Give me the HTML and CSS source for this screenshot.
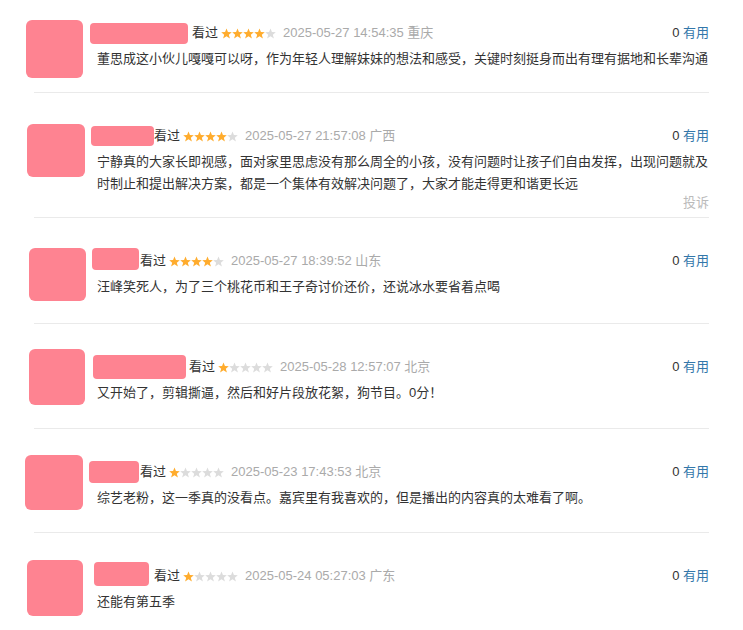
FILE: index.html
```html
<!DOCTYPE html>
<html lang="zh-CN">
<head>
  <meta charset="UTF-8">
  <meta name="viewport" content="width=device-width, initial-scale=1.0">
  <title>短评</title>
  <link rel="stylesheet" href="styles.css">
</head>
<body>
  <!-- 星星图形 -->
  <svg class="sprite" width="0" height="0">
    <defs>
      <symbol id="star" viewBox="0 0 10 10">
        <polygon points="5,0.4 6.3,3.7 9.8,3.8 7.1,6.1 8.1,9.6 5,7.6 1.9,9.6 2.9,6.1 0.2,3.8 3.7,3.7"/>
      </symbol>
    </defs>
  </svg>

  <div class="comment-list">

    <div class="comment-item">
      <div class="avatar avatar-1"></div>
      <div class="comment-body">
        <div class="comment-info">
          <div class="meta">
            <span class="user-name name-1"></span>
            <span class="status">看过</span>
            <span class="stars">
              <svg class="on"><use href="#star"/></svg><svg class="on"><use href="#star"/></svg><svg class="on"><use href="#star"/></svg><svg class="on"><use href="#star"/></svg><svg><use href="#star"/></svg>
            </span>
            <span class="time">2025-05-27 14:54:35 重庆</span>
          </div>
          <div class="votes"><span class="count">0</span> <a href="#">有用</a></div>
        </div>
        <p class="short">董思成这小伙儿嘎嘎可以呀，作为年轻人理解妹妹的想法和感受，关键时刻挺身而出有理有据地和长辈沟通</p>
        <div class="actions"><a href="#" class="report">投诉</a></div>
      </div>
    </div>

    <div class="comment-item hover">
      <div class="avatar avatar-2"></div>
      <div class="comment-body">
        <div class="comment-info">
          <div class="meta">
            <span class="user-name name-2"></span>
            <span class="status">看过</span>
            <span class="stars">
              <svg class="on"><use href="#star"/></svg><svg class="on"><use href="#star"/></svg><svg class="on"><use href="#star"/></svg><svg class="on"><use href="#star"/></svg><svg><use href="#star"/></svg>
            </span>
            <span class="time">2025-05-27 21:57:08 广西</span>
          </div>
          <div class="votes"><span class="count">0</span> <a href="#">有用</a></div>
        </div>
        <p class="short">宁静真的大家长即视感，面对家里思虑没有那么周全的小孩，没有问题时让孩子们自由发挥，出现问题就及时制止和提出解决方案，都是一个集体有效解决问题了，大家才能走得更和谐更长远</p>
        <div class="actions"><a href="#" class="report">投诉</a></div>
      </div>
    </div>

    <div class="comment-item item-3">
      <div class="avatar avatar-3"></div>
      <div class="comment-body">
        <div class="comment-info">
          <div class="meta">
            <span class="user-name name-3"></span>
            <span class="status">看过</span>
            <span class="stars">
              <svg class="on"><use href="#star"/></svg><svg class="on"><use href="#star"/></svg><svg class="on"><use href="#star"/></svg><svg class="on"><use href="#star"/></svg><svg><use href="#star"/></svg>
            </span>
            <span class="time">2025-05-27 18:39:52 山东</span>
          </div>
          <div class="votes"><span class="count">0</span> <a href="#">有用</a></div>
        </div>
        <p class="short">汪峰笑死人，为了三个桃花币和王子奇讨价还价，还说冰水要省着点喝</p>
        <div class="actions"><a href="#" class="report">投诉</a></div>
      </div>
    </div>

    <div class="comment-item item-4">
      <div class="avatar avatar-4"></div>
      <div class="comment-body">
        <div class="comment-info">
          <div class="meta">
            <span class="user-name name-4"></span>
            <span class="status">看过</span>
            <span class="stars">
              <svg class="on"><use href="#star"/></svg><svg><use href="#star"/></svg><svg><use href="#star"/></svg><svg><use href="#star"/></svg><svg><use href="#star"/></svg>
            </span>
            <span class="time">2025-05-28 12:57:07 北京</span>
          </div>
          <div class="votes"><span class="count">0</span> <a href="#">有用</a></div>
        </div>
        <p class="short">又开始了，剪辑撕逼，然后和好片段放花絮，狗节目。0分！</p>
        <div class="actions"><a href="#" class="report">投诉</a></div>
      </div>
    </div>

    <div class="comment-item item-5">
      <div class="avatar avatar-5"></div>
      <div class="comment-body">
        <div class="comment-info">
          <div class="meta">
            <span class="user-name name-5"></span>
            <span class="status">看过</span>
            <span class="stars">
              <svg class="on"><use href="#star"/></svg><svg><use href="#star"/></svg><svg><use href="#star"/></svg><svg><use href="#star"/></svg><svg><use href="#star"/></svg>
            </span>
            <span class="time">2025-05-23 17:43:53 北京</span>
          </div>
          <div class="votes"><span class="count">0</span> <a href="#">有用</a></div>
        </div>
        <p class="short">综艺老粉，这一季真的没看点。嘉宾里有我喜欢的，但是播出的内容真的太难看了啊。</p>
        <div class="actions"><a href="#" class="report">投诉</a></div>
      </div>
    </div>

    <div class="comment-item">
      <div class="avatar avatar-6"></div>
      <div class="comment-body">
        <div class="comment-info">
          <div class="meta">
            <span class="user-name name-6"></span>
            <span class="status">看过</span>
            <span class="stars">
              <svg class="on"><use href="#star"/></svg><svg><use href="#star"/></svg><svg><use href="#star"/></svg><svg><use href="#star"/></svg><svg><use href="#star"/></svg>
            </span>
            <span class="time">2025-05-24 05:27:03 广东</span>
          </div>
          <div class="votes"><span class="count">0</span> <a href="#">有用</a></div>
        </div>
        <p class="short">还能有第五季</p>
        <div class="actions"><a href="#" class="report">投诉</a></div>
      </div>
    </div>

  </div>
</body>
</html>
```

FILE: styles.css
```css
body {
  margin: 0;
  background: #fff;
  font-family: "Liberation Sans", "Noto Sans CJK SC", sans-serif;
  font-size: 13px;
  color: #333;
}

.sprite {
  position: absolute;
  width: 0;
  height: 0;
}

.comment-list {
  width: 675px;
  margin-left: 34px;
}

.comment-item {
  display: flex;
  align-items: flex-start;
  padding: 33px 0 4px;
  border-bottom: 1px solid #eaeaea;
}

.comment-item:first-child {
  padding-top: 23px;
}

.comment-item:last-child {
  border-bottom: none;
}

.item-3 { padding-bottom: 7px; }
.item-4 { padding-bottom: 6px; }
.item-5 { padding-bottom: 5px; }

/* 头像（已打码） */
.avatar {
  flex: none;
  width: 57px;
  height: 56px;
  margin: -3px 13px 0 -7px;
  background: #fe8391;
  border-radius: 6px;
}

.avatar-1 { margin-top: -3px; width: 57px; height: 58px; margin-left: -8px; margin-right: 14px; }
.avatar-2 { margin-top: -2px; width: 58px; height: 53px; margin-left: -7px; margin-right: 12px; }
.avatar-3 { margin-top: -3px; width: 57px; height: 53px; margin-left: -5px; margin-right: 11px; }
.avatar-4 { margin-top: -8px; width: 56px; height: 56px; margin-left: -5px; margin-right: 12px; }
.avatar-5 { margin-top: -7px; width: 58px; height: 55px; margin-left: -9px; margin-right: 14px; }
.avatar-6 { margin-top: -6px; width: 56px; height: 56px; margin-left: -7px; margin-right: 14px; }

.comment-body {
  flex: 1;
  min-width: 0;
}

.comment-info {
  display: flex;
  justify-content: space-between;
  align-items: center;
  height: 20px;
  line-height: 20px;
}

.meta {
  display: flex;
  align-items: center;
}

/* 用户名（已打码） */
.user-name {
  display: block;
  height: 21px;
  background: #fe8391;
  border-radius: 4px;
}

.name-1 { width: 98px; margin-left: -7px; margin-right: 4px; }
.name-2 { width: 63px; height: 20px; margin-left: -6px; margin-right: 0; }
.name-3 { width: 47px; height: 22px; margin-left: -5px; margin-right: 1px; margin-top: -4px; }
.name-4 { width: 93px; height: 24px; margin-left: -4px; margin-right: 3px; }
.name-5 { width: 50px; height: 22px; margin-left: -8px; margin-right: 1px; }
.name-6 { width: 55px; height: 24px; margin-left: -3px; margin-right: 5px; margin-top: -5px; }

.status {
  color: #333;
}

.stars {
  display: flex;
  margin-left: 3px;
}

.stars svg {
  width: 11px;
  height: 11px;
  fill: #dcdcdc;
}

.stars svg.on {
  fill: #ffac2d;
}

.time {
  margin-left: 7px;
  color: #aaa;
}

.votes {
  color: #333;
}

.votes a {
  color: #3377aa;
  text-decoration: none;
}

.short {
  margin: 5px 0 0;
  line-height: 22px;
  color: #333;
}

.actions {
  margin-top: -2px;
  text-align: right;
  line-height: 20px;
}

.report {
  visibility: hidden;
  color: #bbb;
  text-decoration: none;
}

.comment-item.hover .report {
  visibility: visible;
}
```
